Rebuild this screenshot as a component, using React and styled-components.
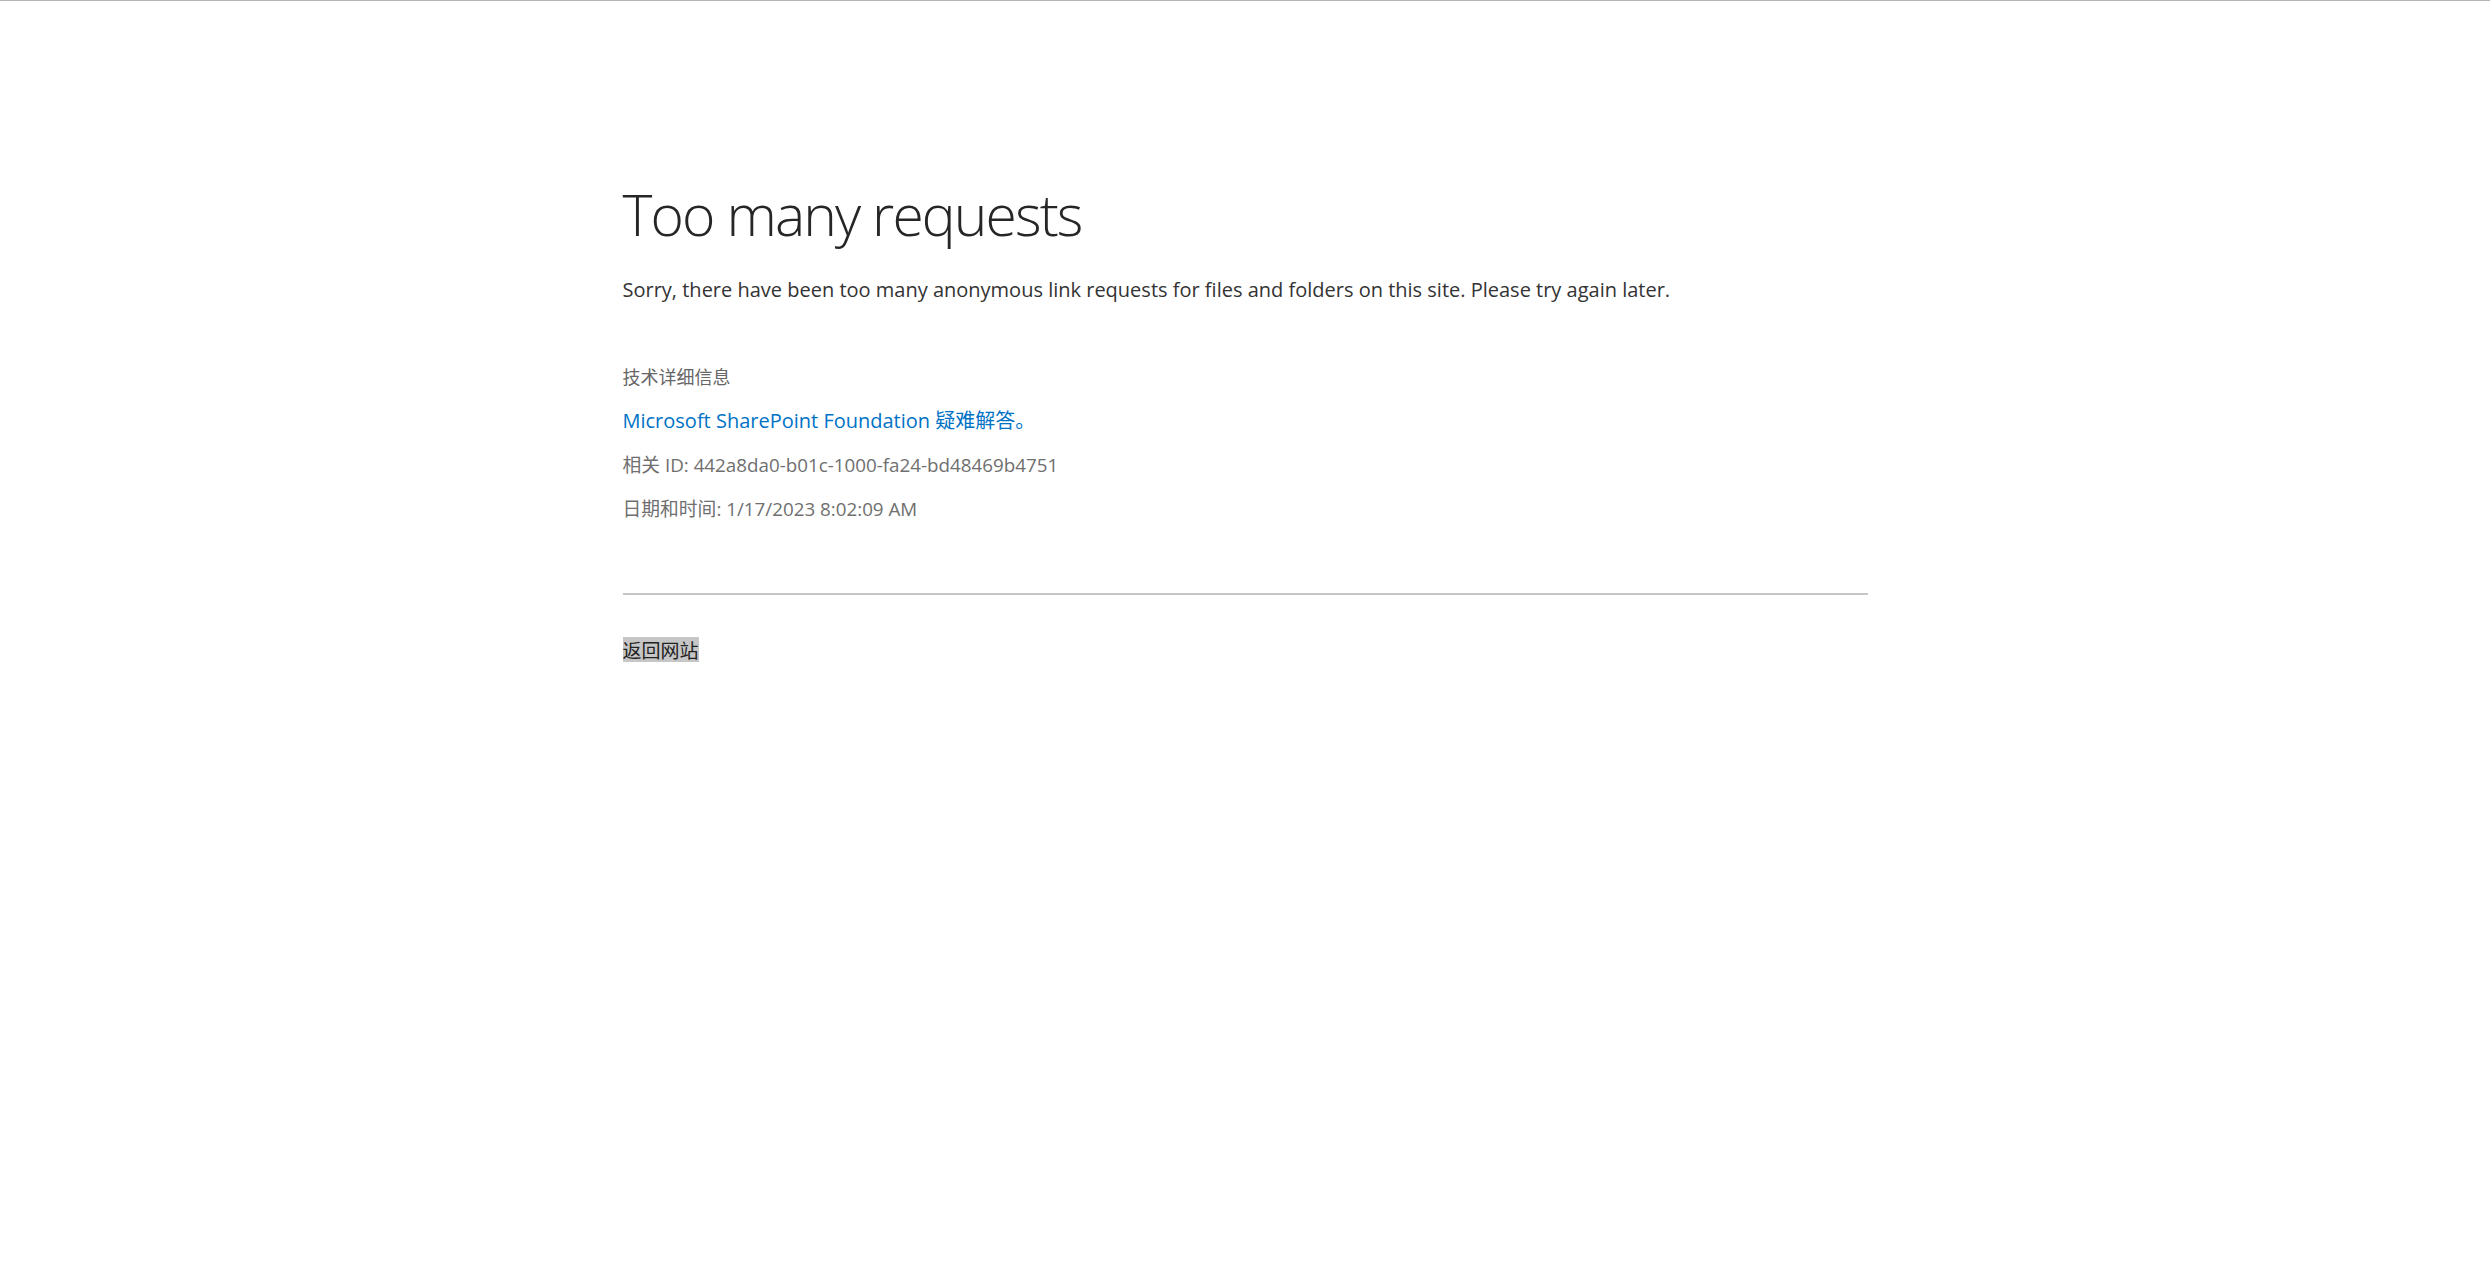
import React from 'react';
import styled, { createGlobalStyle } from 'styled-components';

const GlobalStyle = createGlobalStyle`
  html, body {
    margin: 0;
    padding: 0;
    background: #ffffff;
  }
  body {
    font-family: "Open Sans", "Noto Sans CJK SC", sans-serif;
  }
`;

const Page = styled.div`
  min-height: 1262px;
  border-top: 1px solid #b4b4b4;
  box-sizing: border-box;
`;

const Content = styled.div`
  width: 1245px;
  margin: 0 auto;
  padding-top: 178px;
`;

const Title = styled.h1`
  margin: 0;
  font-family: "Open Sans", "Noto Sans CJK SC", sans-serif;
  font-weight: 300;
  font-size: 57px;
  line-height: 70px;
  color: #262626;
  letter-spacing: -1.9px;
`;

const Message = styled.p`
  margin: 27px 0 0;
  font-size: 20px;
  line-height: 28px;
  color: #333333;
`;

const Details = styled.div`
  margin-top: 59px;
  display: flex;
  flex-direction: column;
  gap: 16px;
`;

const Label = styled.div`
  font-size: ${props => props.size || 18}px;
  line-height: 28px;
  color: ${props => props.tone || '#666666'};
`;

const HelpLink = styled.a`
  font-size: 20px;
  line-height: 28px;
  color: #0072c6;
  text-decoration: none;
`;

const Divider = styled.hr`
  margin: 70px 0 0;
  border: 0;
  border-top: 2px solid #c6c6c6;
`;

const BackLink = styled.a`
  display: inline-block;
  margin-top: 42px;
  font-family: "Noto Sans CJK SC", sans-serif;
  font-size: 19px;
  line-height: 25px;
  color: #222222;
  background: #c6c6c6;
  text-decoration: none;
`;

export default function App() {
  return (
    <>
      <GlobalStyle />
      <Page>
        <Content>
          <Title>Too many requests</Title>
          <Message>
            Sorry, there have been too many anonymous link requests for files and folders on this site. Please try again later.
          </Message>
          <Details>
            <Label>技术详细信息</Label>
            <HelpLink href="#">Microsoft SharePoint Foundation 疑难解答。</HelpLink>
            <Label size={18.8} tone="#6f6f6f">相关 ID: 442a8da0-b01c-1000-fa24-bd48469b4751</Label>
            <Label size={18.8} tone="#6f6f6f">日期和时间: 1/17/2023 8:02:09 AM</Label>
          </Details>
          <Divider />
          <BackLink href="#">返回网站</BackLink>
        </Content>
      </Page>
    </>
  );
}
